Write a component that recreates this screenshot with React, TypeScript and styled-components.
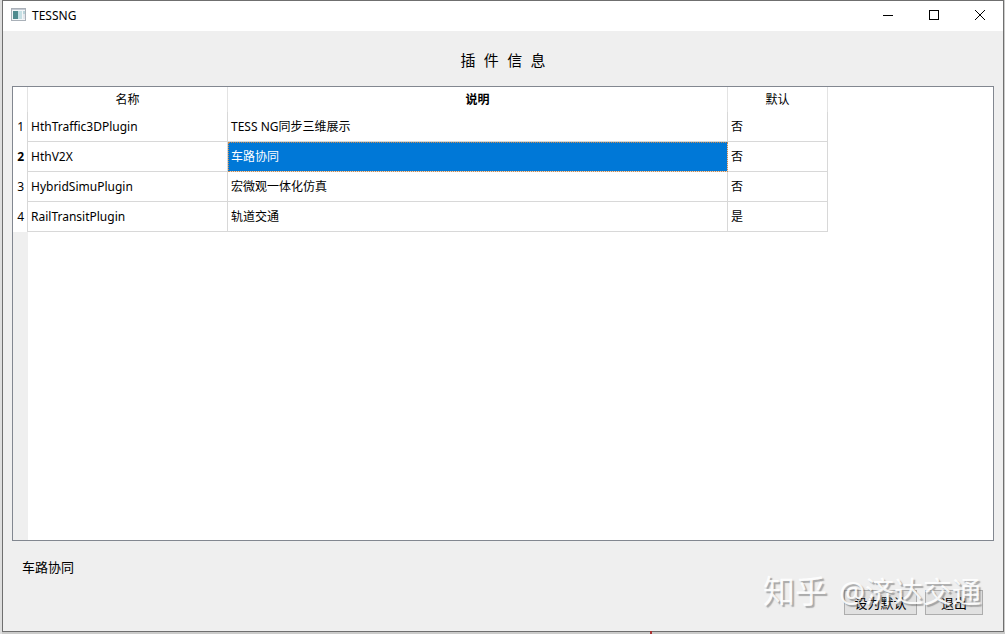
import React, { useState } from "react";
import styled, { createGlobalStyle } from "styled-components";

const GlobalStyle = createGlobalStyle`
  * { box-sizing: border-box; }
  body {
    margin: 0;
    background: #cbcbca;
    color: #000;
    font-family: "Noto Sans", "Noto Sans CJK SC", sans-serif;
    font-size: 12px;
  }
`;

const Desktop = styled.div`
  position: relative;
  display: flex;
  min-height: 100vh;
  padding: 0 1px 2px 2px;
  background: linear-gradient(to right, #dedede 0, #dedede 2px, transparent 2px);
`;

const Window = styled.main`
  flex: 1;
  min-width: 0;
  display: flex;
  flex-direction: column;
  background: #efefef;
  border: 1px solid #6f6f6f;
`;

const TitleBar = styled.header`
  display: flex;
  align-items: center;
  height: 30px;
  padding: 0 0 2px 8px;
  background: #fff;
`;

const AppName = styled.span`
  flex: 1;
  padding-left: 5px;
`;

const CaptionButton = styled.button`
  display: flex;
  align-items: center;
  justify-content: center;
  width: 46px;
  height: 28px;
  padding: 0;
  border: 0;
  background: transparent;
`;

const Body = styled.section`
  flex: 1;
  display: flex;
  flex-direction: column;
  padding: 0 9px 16px;
`;

const Heading = styled.h1`
  margin: 0;
  height: 55px;
  padding-top: 4px;
  font: 15px/52px "Liberation Sans", "Noto Sans CJK SC", sans-serif;
  text-align: center;
  white-space: pre;
`;

const TableView = styled.div`
  flex: 1;
  display: flex;
  flex-direction: column;
  align-items: flex-start;
  background: #fff;
  border: 1px solid #828790;
  overflow: auto;
`;

const Gutter = styled.div`
  flex: 1;
  width: 15px;
  background: #efefef;
`;

const Table = styled.table`
  table-layout: fixed;
  width: 815px;
  border-collapse: separate;
  border-spacing: 0;
`;

const Col = styled.col<{ $width: number }>`
  width: ${(p) => p.$width}px;
`;

const ColumnHeader = styled.th<{ $active?: boolean }>`
  height: 25px;
  padding: 0;
  border-right: 1px solid #e3e3e3;
  font-weight: ${(p) => (p.$active ? 700 : 400)};
  line-height: 18px;
  text-align: center;
`;

const RowHeader = styled.th<{ $active?: boolean }>`
  height: 30px;
  padding: 0 3px 0 0;
  border-right: 1px solid #d8d8d8;
  font-weight: ${(p) => (p.$active ? 700 : 400)};
  line-height: 18px;
  text-align: right;
`;

const Cell = styled.td<{ $selected?: boolean }>`
  height: 30px;
  padding: 0 3px;
  border-right: 1px solid #d8d8d8;
  border-bottom: 1px solid #d8d8d8;
  line-height: 18px;
  white-space: nowrap;
  cursor: default;
  background: ${(p) => (p.$selected ? "#0078d7" : "#fff")};
  background-clip: padding-box;
  color: ${(p) => (p.$selected ? "#fff" : "#000")};
  outline: ${(p) => (p.$selected ? "1px dotted #c98a50" : "none")};
  outline-offset: -1px;
`;

const Description = styled.p`
  margin: 0;
  padding: 16px 10px 0;
  font-size: 13px;
  line-height: 20px;
`;

const Actions = styled.div`
  display: flex;
  justify-content: flex-end;
  gap: 8px;
  padding: 13px 11px 0;
`;

const ActionButton = styled.button<{ $width: number }>`
  width: ${(p) => p.$width}px;
  height: 25px;
  padding: 0;
  border: 1px solid #adadad;
  background: #e1e1e1;
  color: #000;
  font-family: inherit;
  font-size: 13px;
  line-height: 20px;
`;

const Watermark = styled.div`
  position: absolute;
  right: 24px;
  bottom: 20px;
  display: flex;
  align-items: baseline;
  gap: 12px;
  color: rgba(255, 255, 255, 0.9);
  font-size: 29px;
  line-height: 44px;
  text-shadow: 2px 2px 1px rgba(100, 100, 100, 0.5);
  white-space: nowrap;
  pointer-events: none;
`;

const SiteName = styled.span`
  font-size: 32px;
`;

const RedTick = styled.i`
  position: absolute;
  left: 650px;
  bottom: 0;
  width: 2px;
  height: 3px;
  background: #a33;
`;

const AppIcon = () => (
  <svg width="16" height="14" viewBox="0 0 16 14" aria-hidden="true">
    <rect x="0.5" y="0.5" width="14" height="12" fill="#f4f6f8" stroke="#a9b0b8" />
    <rect x="1" y="1" width="13" height="1" fill="#c3c9d2" />
    <rect x="2" y="3" width="5" height="8" fill="#4f8a8e" />
    <rect x="7" y="3" width="4" height="8" fill="#c5dfe4" />
    <rect x="12" y="3" width="2" height="3" fill="#b9d3d8" />
    <rect x="12" y="6" width="2" height="5" fill="#e3e7ec" />
  </svg>
);

const plugins = [
  { name: "HthTraffic3DPlugin", description: "TESS NG同步三维展示", isDefault: "否" },
  { name: "HthV2X", description: "车路协同", isDefault: "否" },
  { name: "HybridSimuPlugin", description: "宏微观一体化仿真", isDefault: "否" },
  { name: "RailTransitPlugin", description: "轨道交通", isDefault: "是" },
];

const columns = [
  { key: "name", label: "名称", width: 200 },
  { key: "description", label: "说明", width: 500 },
  { key: "isDefault", label: "默认", width: 100 },
] as const;

export default function App() {
  const [selected, setSelected] = useState({ row: 1, col: 1 });

  return (
    <Desktop>
      <GlobalStyle />
      <Window>
        <TitleBar>
          <AppIcon />
          <AppName>TESSNG</AppName>
          <CaptionButton aria-label="最小化">
            <svg width="10" height="10" shapeRendering="crispEdges">
              <path d="M0 5.5h10" stroke="#000" />
            </svg>
          </CaptionButton>
          <CaptionButton aria-label="最大化">
            <svg width="10" height="10" shapeRendering="crispEdges">
              <rect x="0.5" y="0.5" width="9" height="9" fill="none" stroke="#000" />
            </svg>
          </CaptionButton>
          <CaptionButton aria-label="关闭">
            <svg width="10" height="10">
              <path d="M0 0l10 10M10 0l-10 10" stroke="#000" />
            </svg>
          </CaptionButton>
        </TitleBar>
        <Body>
          <Heading>{"插  件  信  息"}</Heading>
          <TableView>
            <Table>
              <colgroup>
                <Col $width={15} />
                {columns.map((c) => (
                  <Col key={c.key} $width={c.width} />
                ))}
              </colgroup>
              <thead>
                <tr>
                  <ColumnHeader />
                  {columns.map((c, i) => (
                    <ColumnHeader key={c.key} scope="col" $active={selected.col === i}>
                      {c.label}
                    </ColumnHeader>
                  ))}
                </tr>
              </thead>
              <tbody>
                {plugins.map((plugin, row) => (
                  <tr key={plugin.name}>
                    <RowHeader scope="row" $active={selected.row === row}>
                      {row + 1}
                    </RowHeader>
                    {columns.map((c, col) => (
                      <Cell
                        key={c.key}
                        $selected={selected.row === row && selected.col === col}
                        onClick={() => setSelected({ row, col })}
                      >
                        {plugin[c.key]}
                      </Cell>
                    ))}
                  </tr>
                ))}
              </tbody>
            </Table>
            <Gutter />
          </TableView>
          <Description>{plugins[selected.row].description}</Description>
          <Actions>
            <ActionButton $width={73}>设为默认</ActionButton>
            <ActionButton $width={58}>退出</ActionButton>
          </Actions>
        </Body>
      </Window>
      <Watermark>
        <SiteName>知乎</SiteName>
        <span>@济达交通</span>
      </Watermark>
      <RedTick />
    </Desktop>
  );
}
